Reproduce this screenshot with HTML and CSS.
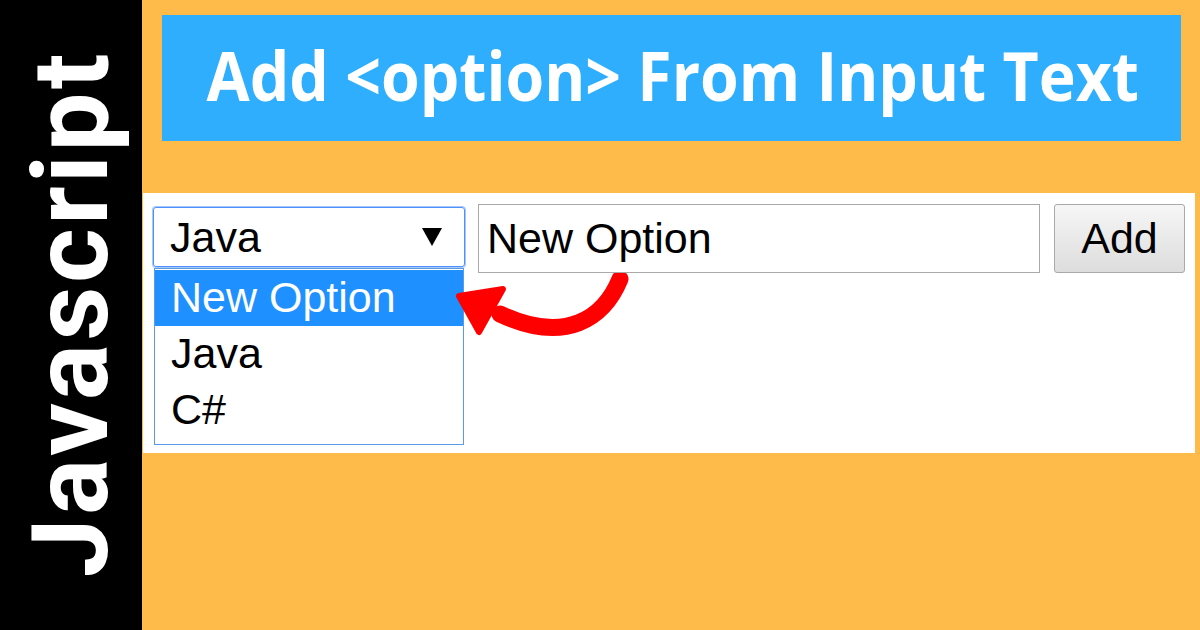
FILE: index.html
```html
<!DOCTYPE html>
<html>
<head>
	<title>Add option From Input Text</title>
	<meta charset="utf-8">
	<link rel="stylesheet" href="styles.css">
</head>
<body>
	<div class="page">
		<div class="side"><span class="side-text">Javascript</span></div>
		<div class="main">
			<div class="banner"><span class="banner-text">Add &lt;option&gt; From Input Text</span></div>
			<div class="panel">
				<div class="select">
					<span>Java</span>
					<span class="caret"></span>
					<ul class="dropdown">
						<li class="current">New Option</li>
						<li>Java</li>
						<li>C#</li>
					</ul>
				</div>
				<div class="text-input">New Option</div>
				<div class="btn">Add</div>
				<svg class="arrow" width="200" height="80" viewBox="443 273 200 80">
					<path d="M620 279 C604 318 566 345 500 314" fill="none" stroke="#ff0000" stroke-width="17" stroke-linecap="round"/>
					<polygon points="459,296 503,289 479,332" fill="#ff0000" stroke="#ff0000" stroke-width="6" stroke-linejoin="round"/>
				</svg>
			</div>
		</div>
	</div>
</body>
</html>
```

FILE: styles.css
```css
body,div,ul,li{margin:0;padding:0;}
ul{list-style-type:none;}
body{background:#febb4a;font:43px/1 "Liberation Sans",Arial,sans-serif;color:#000;}
.page{display:flex;width:1200px;height:630px;overflow:hidden;}
.side{width:142px;background:#000;display:flex;align-items:center;justify-content:center;flex-shrink:0;}
.side-text{writing-mode:vertical-rl;transform:rotate(180deg);color:#fff;font:700 105px/1 Roboto,sans-serif;letter-spacing:3.5px;padding-top:3px;}
.main{flex:1;background:#febb4a;padding-top:15px;}
.banner{height:126px;margin:0 19px 0 20px;background:#2eaefd;display:flex;align-items:center;justify-content:center;}
.banner-text{display:inline-block;color:#fff;font:700 68px/1 "Open Sans",sans-serif;transform:scaleX(0.92);white-space:nowrap;margin-bottom:6px;margin-left:2px;}
.panel{position:relative;height:260px;margin:52px 5px 0 1px;background:#fff;display:flex;align-items:flex-start;padding:11px 0 0 10px;box-sizing:border-box;}
.select{position:relative;width:312px;height:60px;margin-top:3px;box-sizing:border-box;border:1px solid #4d90fe;box-shadow:0 0 0 1px #a8c8f6;border-radius:3px;display:flex;align-items:center;justify-content:space-between;padding:0 22px 0 16px;}
.caret{width:0;height:0;border-left:10px solid transparent;border-right:10px solid transparent;border-top:18px solid #000;}
.dropdown{position:absolute;left:0;top:60px;width:310px;height:177px;box-sizing:border-box;border:1px solid #5b9be6;background:#fff;padding-top:1px;}
.dropdown li{height:56px;line-height:54px;padding-left:16px;}
.dropdown li.current{background:#1e90ff;color:#fff;}
.text-input{width:562px;height:69px;box-sizing:border-box;margin-left:13px;border:1px solid #a9a9a9;line-height:67px;padding-left:8px;}
.btn{width:131px;height:69px;box-sizing:border-box;margin-left:14px;border:1px solid #a9a9a9;border-radius:3px;background:linear-gradient(#f6f6f6,#dddddd);text-align:center;line-height:67px;}
.arrow{position:absolute;left:300px;top:80px;}
```
